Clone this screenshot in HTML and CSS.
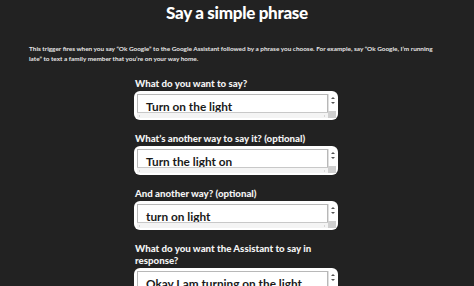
FILE: index.html
```html
<!DOCTYPE html>
<html>
<head>
<meta charset="utf-8">
<link rel="stylesheet" href="styles.css">
</head>
<body>
<h1 class="title">Say a simple phrase</h1>
<p class="desc">This trigger fires when you say “Ok Google” to the Google Assistant followed by a phrase you choose. For example, say “Ok Google, I’m running late” to text a family member that you’re on your way home.</p>
<form class="form">
  <div class="group">
    <label class="label">What do you want to say?</label>
    <div class="field">
      <div class="ta">
        <div class="ta-row">
          <div class="ta-text">Turn on the light</div>
          <div class="vscroll"><span class="up"></span><span class="down"></span></div>
        </div>
        <div class="hscroll"><span class="left"></span><span class="right"></span><span class="grip"></span></div>
      </div>
    </div>
  </div>
  <div class="group">
    <label class="label">What’s another way to say it? (optional)</label>
    <div class="field">
      <div class="ta">
        <div class="ta-row">
          <div class="ta-text">Turn the light on</div>
          <div class="vscroll"><span class="up"></span><span class="down"></span></div>
        </div>
        <div class="hscroll"><span class="left"></span><span class="right"></span><span class="grip"></span></div>
      </div>
    </div>
  </div>
  <div class="group">
    <label class="label">And another way? (optional)</label>
    <div class="field">
      <div class="ta">
        <div class="ta-row">
          <div class="ta-text">turn on light</div>
          <div class="vscroll"><span class="up"></span><span class="down"></span></div>
        </div>
        <div class="hscroll"><span class="left"></span><span class="right"></span><span class="grip"></span></div>
      </div>
    </div>
  </div>
  <div class="group">
    <label class="label">What do you want the Assistant to say in response?</label>
    <div class="field">
      <div class="ta">
        <div class="ta-row">
          <div class="ta-text">Okay I am turning on the light</div>
          <div class="vscroll"><span class="up"></span><span class="down"></span></div>
        </div>
        <div class="hscroll"><span class="left"></span><span class="right"></span><span class="grip"></span></div>
      </div>
    </div>
  </div>
</form>
</body>
</html>
```
FILE: styles.css
```css
html, body {
  margin: 0;
  padding: 0;
  background: #222222;
  height: 100%;
  overflow: hidden;
}
body {
  font-family: Lato, "Open Sans", sans-serif;
  color: #ffffff;
}
.title {
  margin: 0;
  padding-top: 3px;
  font-size: 17px;
  line-height: 20px;
  font-weight: 900;
  text-align: center;
  letter-spacing: -0.3px;
}
.desc {
  margin: 21px 0 0 29px;
  width: 410px;
  font-size: 6.4px;
  line-height: 10px;
  color: #e6e6e6;
  font-weight: 700;
}
.form {
  margin: 13px 0 0 134px;
  width: 204px;
}
.group {
  margin-bottom: 12px;
}
.label {
  display: block;
  font-size: 9.7px;
  line-height: 12px;
  font-weight: 900;
  color: #f2f2f2;
  margin-bottom: 2px;
  padding-left: 1px;
}
.field {
  background: #ffffff;
  border-radius: 6px;
  height: 29px;
  box-sizing: border-box;
  padding: 3px 2px 3px 3px;
}
.ta {
  display: flex;
  flex-direction: column;
  height: 23px;
}
.ta-row {
  display: flex;
  height: 18px;
}
.ta-text {
  flex: 1;
  border: 1px solid #b8b8b8;
  border-bottom: none;
  overflow: hidden;
  font-size: 11.8px;
  line-height: 23px;
  font-weight: 700;
  color: #1a1a1a;
  padding-left: 8px;
  white-space: nowrap;
}
.vscroll {
  width: 8px;
  display: flex;
  flex-direction: column;
  align-items: center;
  gap: 3px;
  padding-top: 3px;
  box-sizing: border-box;
  border-left: 1px solid #e0e0e0;
}
.up, .down {
  width: 0;
  height: 0;
  border-left: 2px solid transparent;
  border-right: 2px solid transparent;
}
.up { border-bottom: 2px solid #555; }
.down { border-top: 2px solid #555; }
.hscroll {
  height: 5px;
  background: #f4f4f4;
  border-top: 1px solid #c8c8c8;
  display: flex;
  align-items: center;
}
.left, .right {
  width: 0;
  height: 0;
  border-top: 1.5px solid transparent;
  border-bottom: 1.5px solid transparent;
}
.left { border-right: 1.5px solid #bbb; margin-left: 2px; }
.right { border-left: 1.5px solid #bbb; margin-left: auto; margin-right: 3px; }
.grip {
  width: 8px;
  height: 7px;
  background: #d0d0d0;
  align-self: flex-end;
}
```
